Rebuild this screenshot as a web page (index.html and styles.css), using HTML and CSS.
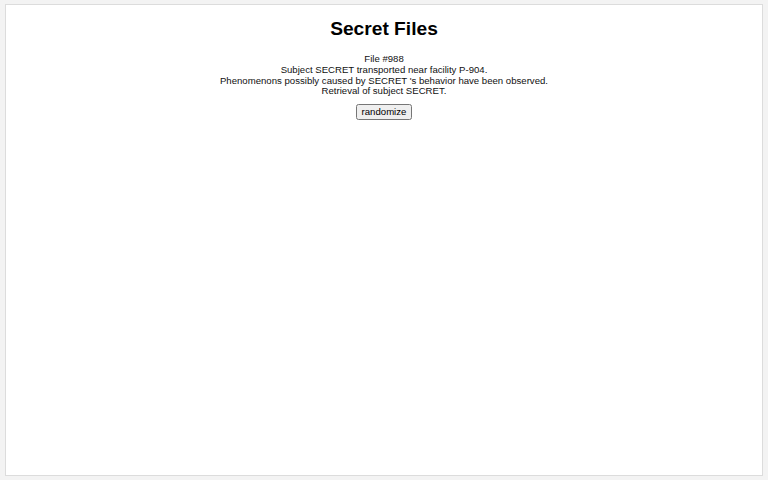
FILE: index.html
```html
<!DOCTYPE html>
<html>
  <head>
    <title>Secret Files</title>
    <link rel="stylesheet" href="styles.css">
  </head>
  <body>
    <div class="container">
      <h1>Secret Files</h1>
      <div class="file-text">
        File #988<br>
        Subject SECRET transported near facility P-904.<br>
        Phenomenons possibly caused by SECRET 's behavior have been observed.<br>
        Retrieval of subject SECRET.
      </div>
      <button class="randomize-button">randomize</button>
    </div>
  </body>
</html>
```

FILE: styles.css
```css
body {
  font-family: "Liberation Sans", Arial, sans-serif;
  background-color: #f3f3f3;
  margin: 0;
  padding: 4px 5px;
}

.container {
  height: 472px;
  background: #fff;
  border: 1px solid #dcdcdc;
  text-align: center;
  box-sizing: border-box;
}

h1 {
  font-size: 19.2px;
  margin: 12px 0 0;
  line-height: 23px;
}

.file-text {
  font-size: 9.6px;
  line-height: 10.8px;
  margin-top: 14px;
  color: #111;
}

.randomize-button {
  margin-top: 7px;
  font-family: "Liberation Sans", Arial, sans-serif;
  font-size: 9.6px;
  padding: 0 4px;
  line-height: 12px;
}
```
